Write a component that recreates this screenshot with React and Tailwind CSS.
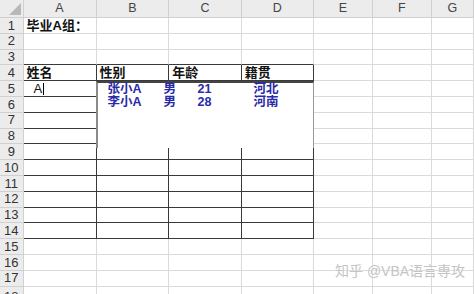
import React from "react";

const COLS = ["A", "B", "C", "D", "E", "F", "G"];
const ROWS = Array.from({ length: 18 }, (_, i) => i + 1);

const FONT = { fontFamily: '"Liberation Sans", "Noto Sans CJK SC", sans-serif' };

function cellClass(r, c) {
  const inTable = r >= 4 && r <= 14 && c <= 3;
  const aboveTable = r === 3 && c <= 3;
  if (inTable) return "relative border-r border-b border-r-[#3a3a3a] border-b-[#3a3a3a] flex items-center overflow-visible whitespace-nowrap";
  if (aboveTable) return "relative border-r border-b border-r-[#dadada] border-b-[#3a3a3a] flex items-center overflow-visible whitespace-nowrap";
  return "relative border-r border-b border-[#dadada] flex items-center overflow-visible whitespace-nowrap";
}

const CONTENT = {
  "1-0": <span className="pl-[3px] text-[13px] font-bold text-[#111]">毕业A组：</span>,
  "4-0": <span className="pl-[3px] text-[13px] font-bold text-[#111]">姓名</span>,
  "4-1": <span className="pl-[3px] text-[13px] font-bold text-[#111]">性别</span>,
  "4-2": <span className="pl-[3px] text-[13px] font-bold text-[#111]">年龄</span>,
  "4-3": <span className="pl-[3px] text-[13px] font-bold text-[#111]">籍贯</span>,
  "5-0": (
    <span className="pl-[10px] text-[13px] text-[#111] flex items-center">
      A<span className="inline-block w-px h-[12px] bg-black ml-[1px]" />
    </span>
  ),
};

export default function App() {
  return (
    <div className="relative w-[474px] h-[294px] overflow-hidden bg-white" style={FONT}>
      <div className="grid grid-cols-[23.5px_73px_72.8px_72.4px_72.3px_59px_58.7px_1fr] grid-rows-[18px_repeat(17,15.8px)]">
        {/* header row */}
        <div className="relative bg-[#ececec] border-r border-b border-[#d0d0d0]">
          <svg className="absolute right-[2px] bottom-[2px]" width="12" height="12" viewBox="0 0 12 12">
            <polygon points="12,0 12,12 0,12" fill="#b8b8b8" />
          </svg>
        </div>
        {COLS.map((c) => (
          <div
            key={c}
            className="bg-[#ececec] border-r border-b border-[#d0d0d0] flex items-center justify-center text-[12.5px] text-[#444]"
          >
            {c}
          </div>
        ))}
        {ROWS.map((r) => (
          <React.Fragment key={r}>
            <div className="bg-[#ececec] border-r border-b border-[#d0d0d0] flex items-center justify-center text-[13px] text-[#333]">
              {r}
            </div>
            {COLS.map((c, ci) => (
              <div key={c} className={cellClass(r, ci)}>
                {CONTENT[`${r}-${ci}`] || null}
              </div>
            ))}
          </React.Fragment>
        ))}
      </div>

      {/* list box overlay on B5:D8 */}
      <div className="absolute left-[95.5px] top-[80.5px] w-[218.5px] h-[67px] bg-white border-t-2 border-l-2 border-r border-t-[#444] border-l-[#8a8a8a] border-r-[#9a9a9a]">
        <div className="grid grid-cols-[56px_34px_56px_auto] pl-[10px] leading-[13px] text-[12.5px] font-semibold text-[#2a2aa8]">
          <span>张小A</span>
          <span>男</span>
          <span>21</span>
          <span>河北</span>
          <span>李小A</span>
          <span>男</span>
          <span>28</span>
          <span>河南</span>
        </div>
      </div>

      {/* watermark */}
      <div
        className="absolute left-[335px] top-[261px] text-[14px] text-[#c4c4c4] whitespace-nowrap"
        style={{ textShadow: "0 0 2px #fff" }}
      >
        知乎 @VBA语言専攻
      </div>
    </div>
  );
}
